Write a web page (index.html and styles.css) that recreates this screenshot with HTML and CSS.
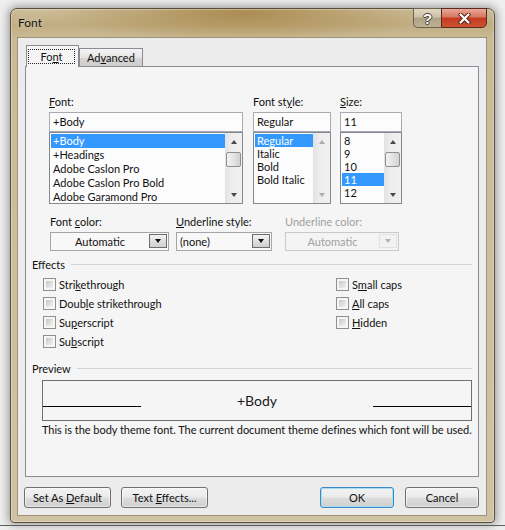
FILE: index.html
```html
<!DOCTYPE html>
<html lang="en">
<head>
  <meta charset="UTF-8">
  <title>Font</title>
  <link rel="stylesheet" href="styles.css">
</head>
<body>

<div class="window">
  <div class="titlebar">
    <span class="title">Font</span>
    <div class="caption">
      <div class="cap-help">?</div>
      <div class="cap-close">
        <svg width="13" height="11" viewBox="0 0 13 11">
          <path d="M2.5 1.5l8 8M10.5 1.5l-8 8" stroke="#5a2418" stroke-width="4.2" stroke-linecap="round"/>
          <path d="M2.5 1.5l8 8M10.5 1.5l-8 8" stroke="#fff" stroke-width="2.2" stroke-linecap="round"/>
        </svg>
      </div>
    </div>
  </div>

  <div class="client">
    <div class="tabs">
      <div class="tab active"><span class="focus">Fo<u>n</u>t</span></div>
      <div class="tab">Ad<u>v</u>anced</div>
    </div>

    <div class="panel">
      <div class="fields">
        <div class="field f-name">
          <div class="lbl"><u>F</u>ont:</div>
          <div class="textbox">+Body</div>
          <div class="listbox">
            <ul class="rows14">
              <li class="sel">+Body</li>
              <li>+Headings</li>
              <li>Adobe Caslon Pro</li>
              <li>Adobe Caslon Pro Bold</li>
              <li>Adobe Garamond Pro</li>
            </ul>
            <div class="scrollbar">
              <span class="sarrow"><i class="up"></i></span>
              <span class="track"><span class="thumb"></span></span>
              <span class="sarrow"><i class="down"></i></span>
            </div>
          </div>
        </div>

        <div class="field f-style">
          <div class="lbl">Font st<u>y</u>le:</div>
          <div class="textbox">Regular</div>
          <div class="listbox">
            <ul>
              <li class="sel">Regular</li>
              <li>Italic</li>
              <li>Bold</li>
              <li>Bold Italic</li>
            </ul>
            <div class="scrollbar off">
              <span class="sarrow"><i class="up"></i></span>
              <span class="track"></span>
              <span class="sarrow"><i class="down"></i></span>
            </div>
          </div>
        </div>

        <div class="field f-size">
          <div class="lbl"><u>S</u>ize:</div>
          <div class="textbox">11</div>
          <div class="listbox">
            <ul>
              <li>8</li>
              <li>9</li>
              <li>10</li>
              <li class="sel">11</li>
              <li>12</li>
            </ul>
            <div class="scrollbar">
              <span class="sarrow"><i class="up"></i></span>
              <span class="track"><span class="thumb"></span></span>
              <span class="sarrow"><i class="down"></i></span>
            </div>
          </div>
        </div>
      </div>

      <div class="dropdowns">
        <div class="field d-color">
          <div class="lbl">Font <u>c</u>olor:</div>
          <div class="combo centered"><span class="val">Automatic</span><span class="dbtn"><i></i></span></div>
        </div>
        <div class="field d-uline">
          <div class="lbl"><u>U</u>nderline style:</div>
          <div class="combo"><span class="val">(none)</span><span class="dbtn"><i></i></span></div>
        </div>
        <div class="field d-ucolor disabled">
          <div class="lbl">Underline color:</div>
          <div class="combo centered"><span class="val">Automatic</span><span class="dbtn"><i></i></span></div>
        </div>
      </div>

      <div class="group-head"><span>Effects</span><i></i></div>
      <div class="checks">
        <label class="check"><span class="cb"></span><span>Stri<u>k</u>ethrough</span></label>
        <label class="check"><span class="cb"></span><span>S<u>m</u>all caps</span></label>
        <label class="check"><span class="cb"></span><span>Doub<u>l</u>e strikethrough</span></label>
        <label class="check"><span class="cb"></span><span><u>A</u>ll caps</span></label>
        <label class="check"><span class="cb"></span><span>Su<u>p</u>erscript</span></label>
        <label class="check"><span class="cb"></span><span><u>H</u>idden</span></label>
        <label class="check"><span class="cb"></span><span>Su<u>b</u>script</span></label>
      </div>

      <div class="group-head"><span>Preview</span><i></i></div>
      <div class="preview">
        <span class="rule"></span>
        <span class="sample">+Body</span>
        <span class="rule"></span>
      </div>
      <p class="note">This is the body theme font. The current document theme defines which font will be used.</p>
    </div>

    <div class="buttons">
      <button class="btn b-default">Set As <u>D</u>efault</button>
      <button class="btn b-effects">Text <u>E</u>ffects...</button>
      <button class="btn b-ok">OK</button>
      <button class="btn b-cancel">Cancel</button>
    </div>
  </div>
</div>
<div class="screen-edge"></div>

</body>
</html>
```

FILE: styles.css
```css
body {
  margin: 0;
  height: 530px;
  overflow: hidden;
  background: #efefef;
  font-family: Lato, 'Liberation Sans', sans-serif;
  font-size: 11px;
  color: #111;
}

u {
  text-underline-offset: 1px;
}

/* window frame */
.window {
  width: 485px;
  height: 515px;
  margin: 8px 0 0 10px;
  box-sizing: border-box;
  display: flex;
  flex-direction: column;
  border: 1px solid #574d3b;
  border-radius: 7px 7px 4px 4px;
  background:
    radial-gradient(ellipse 190px 28px at 48% 4px, rgba(166, 132, 70, 0.85), rgba(166, 132, 70, 0) 100%),
    linear-gradient(to bottom, #cdbd9a 0, #c1ad82 16px, #cabb96 30px, #d0c3a3 100%);
  box-shadow: 0 0 9px 2px rgba(0, 0, 0, 0.35), inset 0 0 0 1px rgba(255, 255, 255, 0.3);
}

.titlebar {
  height: 28px;
  display: flex;
  align-items: flex-start;
  padding-left: 7px;
}

.title {
  line-height: 28px;
  font-size: 12px;
  color: #151515;
  text-shadow: 0 0 6px rgba(255, 255, 255, 0.6);
}

.caption {
  display: flex;
  margin: -1px 7px 0 auto;
}

.cap-help,
.cap-close {
  height: 20px;
  box-sizing: border-box;
  display: flex;
  align-items: center;
  justify-content: center;
}

.cap-help {
  width: 28px;
  border: 1px solid #6a614f;
  border-right: none;
  border-radius: 0 0 0 5px;
  background: linear-gradient(to bottom, #e2d8c2 0, #cdc1a6 45%, #afa286 50%, #bdb195 100%);
  color: #fff;
  font: bold 15px 'Liberation Sans', sans-serif;
  text-shadow: 1px 0 0 #4a4232, -1px 0 0 #4a4232, 0 1px 0 #4a4232, 0 -1px 0 #4a4232;
}

.cap-close {
  width: 46px;
  border: 1px solid #5a2a1e;
  border-radius: 0 0 5px 0;
  background: linear-gradient(to bottom, #e9a899 0, #d7765f 45%, #c43a20 50%, #cc5233 100%);
}

/* client area */
.client {
  flex: 1;
  margin: 0 7px 6px 6px;
  padding: 7px 7px 0;
  border: 1px solid #9f9276;
  background: #ececec;
}

.tabs {
  display: flex;
  align-items: flex-end;
  height: 21px;
  padding-left: 1px;
}

.tab {
  box-sizing: border-box;
  height: 18px;
  padding: 0 7px;
  line-height: 17px;
  border: 1px solid #898c95;
  border-bottom: none;
  background: linear-gradient(to bottom, #f4f4f4 0, #e6e6e6 50%, #d6d6d6 51%, #cdcdcd 100%);
}

.tab.active {
  position: relative;
  z-index: 1;
  width: 53px;
  height: 22px;
  margin-bottom: -1px;
  padding: 3px 0 0 1px;
  background: #f5f5f5;
}

.focus {
  display: block;
  width: 47px;
  box-sizing: border-box;
  line-height: 13px;
  border: 1px dotted #222;
  text-align: center;
}

.panel {
  height: 411px;
  box-sizing: border-box;
  padding: 0 6px;
  border: 1px solid #898c95;
  background: #f5f5f5;
}

/* font / style / size */
.fields {
  display: flex;
  margin: 28px 0 0 17px;
}

.lbl {
  height: 14px;
  line-height: 14px;
  margin-bottom: 3px;
  white-space: nowrap;
}

.f-name { width: 194px; margin-right: 10px; }
.f-style { width: 78px; margin-right: 9px; }
.f-size { width: 62px; }

.textbox {
  height: 20px;
  box-sizing: border-box;
  padding-left: 3px;
  line-height: 18px;
  border: 1px solid #a9abb2;
  background: #fcfcfc;
}

.listbox {
  display: flex;
  height: 72px;
  box-sizing: border-box;
  border: 1px solid #828790;
  background: #fcfcfc;
  overflow: hidden;
}

.listbox ul {
  flex: 1;
  margin: 0;
  padding: 1px 0 0 1px;
  list-style: none;
  overflow: hidden;
}

.listbox li {
  line-height: 13px;
  padding-left: 2px;
  white-space: nowrap;
}

.listbox ul.rows14 li {
  line-height: 14px;
}

.listbox li.sel {
  background: #3399ff;
  color: #fff;
}

.scrollbar {
  width: 17px;
  display: flex;
  flex-direction: column;
  background: linear-gradient(to right, #e2e2e2 0, #ededed 40%, #f1f1f1 100%);
}

.sarrow {
  height: 17px;
  display: flex;
  align-items: center;
  justify-content: center;
}

.sarrow i {
  width: 0;
  height: 0;
  border-left: 3.5px solid transparent;
  border-right: 3.5px solid transparent;
}

.sarrow i.up { border-bottom: 4px solid #4a4a4a; }
.sarrow i.down { border-top: 4px solid #4a4a4a; }
.scrollbar.off .sarrow i.up { border-bottom-color: #adadad; }
.scrollbar.off .sarrow i.down { border-top-color: #adadad; }

.track {
  flex: 1;
}

.thumb {
  display: block;
  height: 15px;
  margin: 2px 1px 0;
  box-sizing: border-box;
  border: 1px solid #8f8f8f;
  border-radius: 2px;
  background: linear-gradient(to right, #f2f2f2 0, #e4e4e4 50%, #d2d2d2 100%);
}

/* colour / underline combos */
.dropdowns {
  display: flex;
  margin: 11px 0 0 18px;
}

.d-color { width: 119px; margin-right: 7px; }
.d-uline { width: 96px; margin-right: 13px; }
.d-ucolor { width: 114px; }

.combo {
  display: flex;
  height: 19px;
  box-sizing: border-box;
  border: 1px solid #a5a5a5;
  background: #f8f8f8;
}

.combo .val {
  flex: 1;
  line-height: 17px;
  padding-left: 3px;
}

.combo.centered .val {
  text-align: center;
  padding-left: 0;
}

.dbtn {
  width: 18px;
  height: 14px;
  margin: 1px 1px 0 0;
  box-sizing: border-box;
  display: flex;
  align-items: center;
  justify-content: center;
  border: 1px solid #6e6e6e;
  background: linear-gradient(to bottom, #f3f3f3 0, #e0e0e0 50%, #cfcfcf 100%);
}

.dbtn i {
  width: 0;
  height: 0;
  border-left: 3.5px solid transparent;
  border-right: 3.5px solid transparent;
  border-top: 4px solid #111;
}

.disabled .lbl,
.disabled .val {
  color: #a0a0a0;
}

.disabled .combo {
  border-color: #c9c9c9;
  background: #f4f4f4;
}

.disabled .dbtn {
  border-color: #e2e2e2;
  background: #f2f2f2;
}

.disabled .dbtn i {
  border-top-color: #b4b4b4;
}

/* effects and preview groups */
.group-head {
  display: flex;
  align-items: center;
  gap: 6px;
  height: 14px;
  margin-top: 6px;
}

.group-head i {
  flex: 1;
  height: 1px;
  background: #cdd4da;
}

.checks {
  display: grid;
  grid-template-columns: 293px 1fr;
  grid-auto-rows: 19px;
  margin: 4px 0 0 11px;
}

.check {
  display: flex;
  align-items: center;
  gap: 3px;
}

.cb {
  width: 13px;
  height: 13px;
  box-sizing: border-box;
  padding: 2px;
  border: 1px solid #8e8f8f;
  background: linear-gradient(135deg, #c6c6c6 0, #e2e2e2 60%, #f2f2f2 100%) content-box, #f6f6f6;
}

.checks + .group-head {
  margin-top: 10px;
}

.preview {
  display: flex;
  align-items: center;
  height: 41px;
  box-sizing: border-box;
  margin: 5px 0 0 10px;
  border: 1px solid #6f6f6f;
}

.rule {
  width: 98px;
  height: 1px;
  margin-top: 11px;
  background: #000;
}

.sample {
  flex: 1;
  text-align: center;
  font-size: 14px;
  color: #1a1a1a;
}

.note {
  margin: 2px 0 0 10px;
  line-height: 14px;
  letter-spacing: -0.03px;
  white-space: nowrap;
}

/* dialog buttons */
.buttons {
  display: flex;
  margin: 10px 0 0 -1px;
}

.btn {
  height: 21px;
  padding: 0;
  font: inherit;
  color: #111;
  border: 1px solid #707070;
  border-radius: 3px;
  background: linear-gradient(to bottom, #f2f2f2 0, #ebebeb 48%, #dddddd 52%, #cfcfcf 100%);
  box-shadow: inset 0 0 0 1px rgba(255, 255, 255, 0.55);
}

.b-default { width: 87px; margin-right: 10px; }
.b-effects { width: 87px; }
.b-ok {
  width: 74px;
  margin-left: auto;
  margin-right: 11px;
  border-color: #3b8bc8;
  box-shadow: inset 0 0 0 1px #a8dcf3;
}
.b-cancel { width: 74px; }

.screen-edge {
  height: 1px;
  margin-top: 2px;
  background: #5e5e5e;
}
```
